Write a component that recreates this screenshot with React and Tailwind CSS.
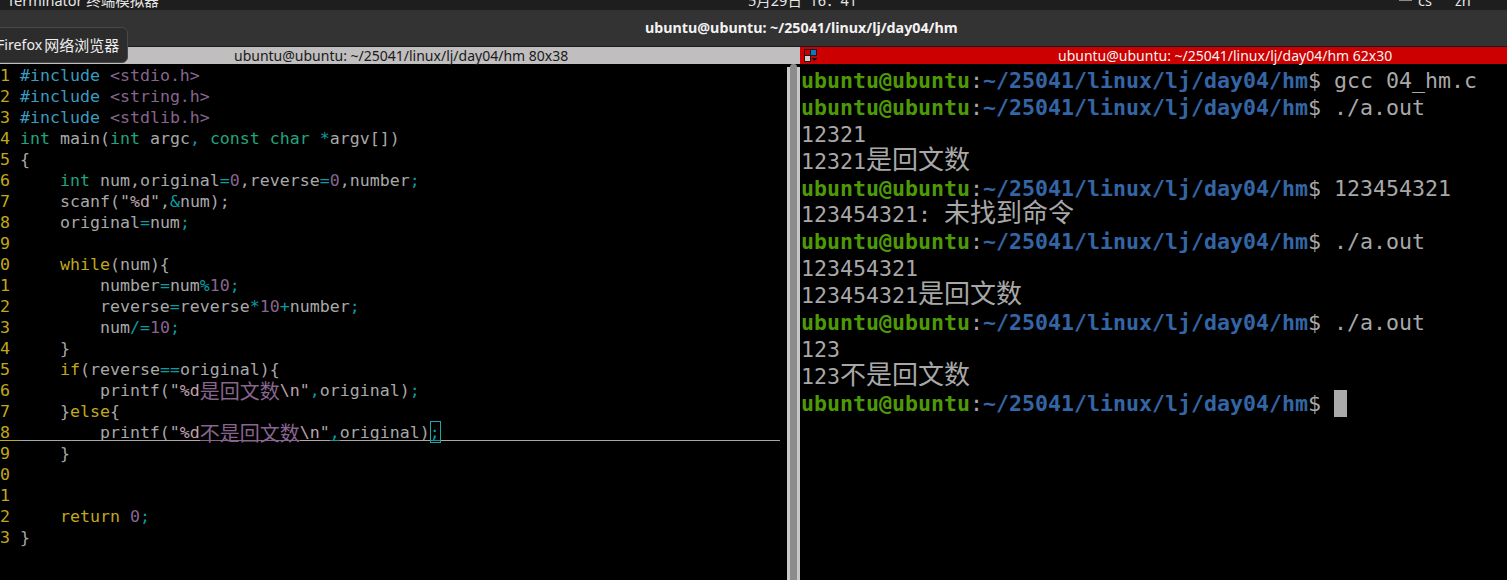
const MONO = "font-['DejaVu_Sans_Mono','Noto_Sans_CJK_SC',monospace]"

const T = '#a8a8a8' // plain text
const Y = '#c0a818' // keyword
const G = '#22a47e' // type
const C = '#0a9ca0' // operator
const P = '#87658e' // string / number
const B = '#3a9cc0' // preproc
const S = '#c0a2ac' // format spec

const CODE = [
  [['#include', B], [' ', T], ['<stdio.h>', P]],
  [['#include', B], [' ', T], ['<string.h>', P]],
  [['#include', B], [' ', T], ['<stdlib.h>', P]],
  [['int', G], [' main(', T], ['int', G], [' argc', T], [',', C], [' ', T], ['const', G], [' ', T], ['char', G], [' ', T], ['*', C], ['argv[])', T]],
  [['{', T]],
  [['    ', T], ['int', G], [' num,original', T], ['=', C], ['0', P], [',reverse', T], ['=', C], ['0', P], [',number', T], [';', C]],
  [['    scanf(', T], ['"', T], ['%d', S], ['"', T], [',', T], ['&', C], ['num);', T]],
  [['    original', T], ['=', C], ['num', T], [';', C]],
  [],
  [['    ', T], ['while', Y], ['(num){', T]],
  [['        number', T], ['=', C], ['num', T], ['%', C], ['10', P], [';', C]],
  [['        reverse', T], ['=', C], ['reverse', T], ['*', C], ['10', P], ['+', C], ['number', T], [';', C]],
  [['        num', T], ['/=', C], ['10', P], [';', C]],
  [['    }', T]],
  [['    ', T], ['if', Y], ['(reverse', T], ['==', C], ['original){', T]],
  [['        printf(', T], ['"', T], ['%d', S], ['是回文数', P], ['\\n', S], ['"', T], [',', C], ['original)', T], [';', C]],
  [['    }', T], ['else', Y], ['{', T]],
  [['        printf(', T], ['"', T], ['%d', S], ['不是回文数', P], ['\\n', S], ['"', T], [',', C], ['original)', T], [';', C]],
  [['    }', T]],
  [],
  [],
  [['    ', T], ['return', Y], [' ', T], ['0', P], [';', C]],
  [['}', T]],
]

const CURSOR_LINE = 17

// wide chars get a bigger size so they take two cells
function Wide({ text, className }) {
  const parts = text.split(/([\u4e00-\u9fff]+)/)
  return parts.map((p, i) =>
    /[\u4e00-\u9fff]/.test(p)
      ? <span key={i} className={className}>{p}</span>
      : <span key={i}>{p}</span>
  )
}

function CodeLine({ tokens, index }) {
  const active = index === CURSOR_LINE
  return (
    <div className="flex h-[21px]">
      <div className={`w-[20px] h-[19px] shrink-0 ${active ? 'border-b border-[#c0a818]' : ''}`}>
        <div className="w-[10px] overflow-hidden flex justify-end text-[#c0a818]">{index + 1}</div>
      </div>
      <div className={`w-[760px] h-[19px] flex whitespace-pre ${active ? 'border-b border-[#a8a8a8]' : ''}`}>
        {tokens.map(([text, color], i) => {
          const last = active && i === tokens.length - 1
          return (
            <span
              key={i}
              style={{ color }}
              className={`relative h-[19px] ${active && text.trim() ? 'border-b border-current' : ''}`}
            >
              <Wide text={text} className="text-[20px] font-['Noto_Sans_CJK_SC']" />
              {last && <span className="absolute -top-[1px] left-0 w-[11px] h-[22px] border border-[#1fa5ad]" />}
            </span>
          )
        })}
      </div>
    </div>
  )
}

function Prompt({ children }) {
  return (
    <div className="h-[26.9px] whitespace-pre">
      <span className="font-bold text-[#4e9a06]">ubuntu@ubuntu</span>
      <span>:</span>
      <span className="font-bold text-[#3465a4]">~/25041/linux/lj/day04/hm</span>
      <span>$ </span>
      {children}
    </div>
  )
}

function Out({ text }) {
  return (
    <div className="h-[26.9px] whitespace-pre">
      <Wide text={text} className="text-[26px] leading-[0] font-['Noto_Sans_CJK_SC']" />
    </div>
  )
}

function GroupIcon() {
  return (
    <svg width="14" height="14" viewBox="0 0 14 14" className="shrink-0">
      <rect x="0.5" y="0.5" width="6" height="6" fill="#cc0000" stroke="#1a1a1a" />
      <rect x="6.5" y="0.5" width="6" height="6" fill="#0a78c8" stroke="#1a1a1a" />
      <rect x="0.5" y="6.5" width="6" height="6" fill="#d0d0d0" stroke="#1a1a1a" />
      <path d="M7.5 9h6l-3 3z" fill="#111" />
    </svg>
  )
}

export default function App() {
  return (
    <div className="relative w-[1507px] h-[580px] overflow-hidden bg-black flex flex-col font-['Noto_Sans','Noto_Sans_CJK_SC',sans-serif]">
      {/* top shell bar, only the bottom of it is in the shot */}
      <div className="h-[10px] shrink-0 bg-[#1e1e1e] overflow-hidden flex items-end text-[#e6e6e6] text-[14.5px] leading-[20px]">
        <div className="pl-[7px] w-[748px] shrink-0 whitespace-pre">Terminator 终端模拟器</div>
        <div className="w-[651px] shrink-0 whitespace-pre">5月29日  16：41</div>
        <div className="flex items-end whitespace-pre">
          <span className="w-[13px] h-[1px] mb-[9px] bg-[#8a8a8a] mr-[6px]" />
          <span className="w-[37px]">cs</span>
          <span>zh</span>
        </div>
      </div>

      {/* window title */}
      <div className="h-[37px] shrink-0 bg-[#333333] border-b border-[#1c1c1c] flex items-center pl-[645px] text-[14.27px] font-bold text-[#f2f2f2] whitespace-pre">
        ubuntu@ubuntu: ~/25041/linux/lj/day04/hm
      </div>

      <div className="flex-1 flex min-h-0">
        <div className="w-[800px] shrink-0 flex flex-col">
          <div className="h-[17px] shrink-0 bg-[#c0bebe] flex items-center pl-[234px] text-[14px] text-[#1a1a1a] whitespace-pre">
            ubuntu@ubuntu: ~/25041/linux/lj/day04/hm 80x38
          </div>
          <div className="flex-1 flex min-h-0">
            <div className={`w-[787px] shrink-0 pt-px text-[16.6px] leading-[21px] ${MONO}`}>
              {CODE.map((tokens, i) => <CodeLine key={i} tokens={tokens} index={i} />)}
            </div>
            <div className="w-[13px] flex">
              <div className="w-[3px] mt-[3px] bg-[#c8c8c8]" />
              <div className="w-[7px] bg-[#8c8c8c] rounded-t-[3px]" />
              <div className="w-[3px] mt-[3px] bg-[#c8c8c8]" />
            </div>
          </div>
        </div>

        <div className="flex-1 flex flex-col">
          <div className="h-[17px] shrink-0 bg-[#cc0000] flex items-center pl-[4px] text-[14px] text-[#f4f4f4] whitespace-pre">
            <GroupIcon />
            <span className="pl-[240px]">ubuntu@ubuntu: ~/25041/linux/lj/day04/hm 62x30</span>
          </div>
          <div className={`flex-1 pt-[3px] pl-[1px] text-[21.6px] leading-[27px] text-[#a8a8a8] ${MONO}`}>
            <Prompt>gcc 04_hm.c</Prompt>
            <Prompt>./a.out</Prompt>
            <Out text="12321" />
            <Out text="12321是回文数" />
            <Prompt>123454321</Prompt>
            <Out text="123454321: 未找到命令" />
            <Prompt>./a.out</Prompt>
            <Out text="123454321" />
            <Out text="123454321是回文数" />
            <Prompt>./a.out</Prompt>
            <Out text="123" />
            <Out text="123不是回文数" />
            <Prompt><span className="inline-block w-[13px] h-[27px] bg-[#aaaaaa] align-top" /></Prompt>
          </div>
        </div>
      </div>

      {/* dock tooltip */}
      <div className="absolute left-[-10px] top-[27px] w-[138px] h-[36px] rounded-[6px] bg-[#2c2c2c] border border-[#484848] flex items-center gap-[2px] pl-[6px] text-[14.2px] text-[#eeeeee] whitespace-pre">
        <span>Firefox</span>
        <span className="text-[15px]">网络浏览器</span>
      </div>
    </div>
  )
}
